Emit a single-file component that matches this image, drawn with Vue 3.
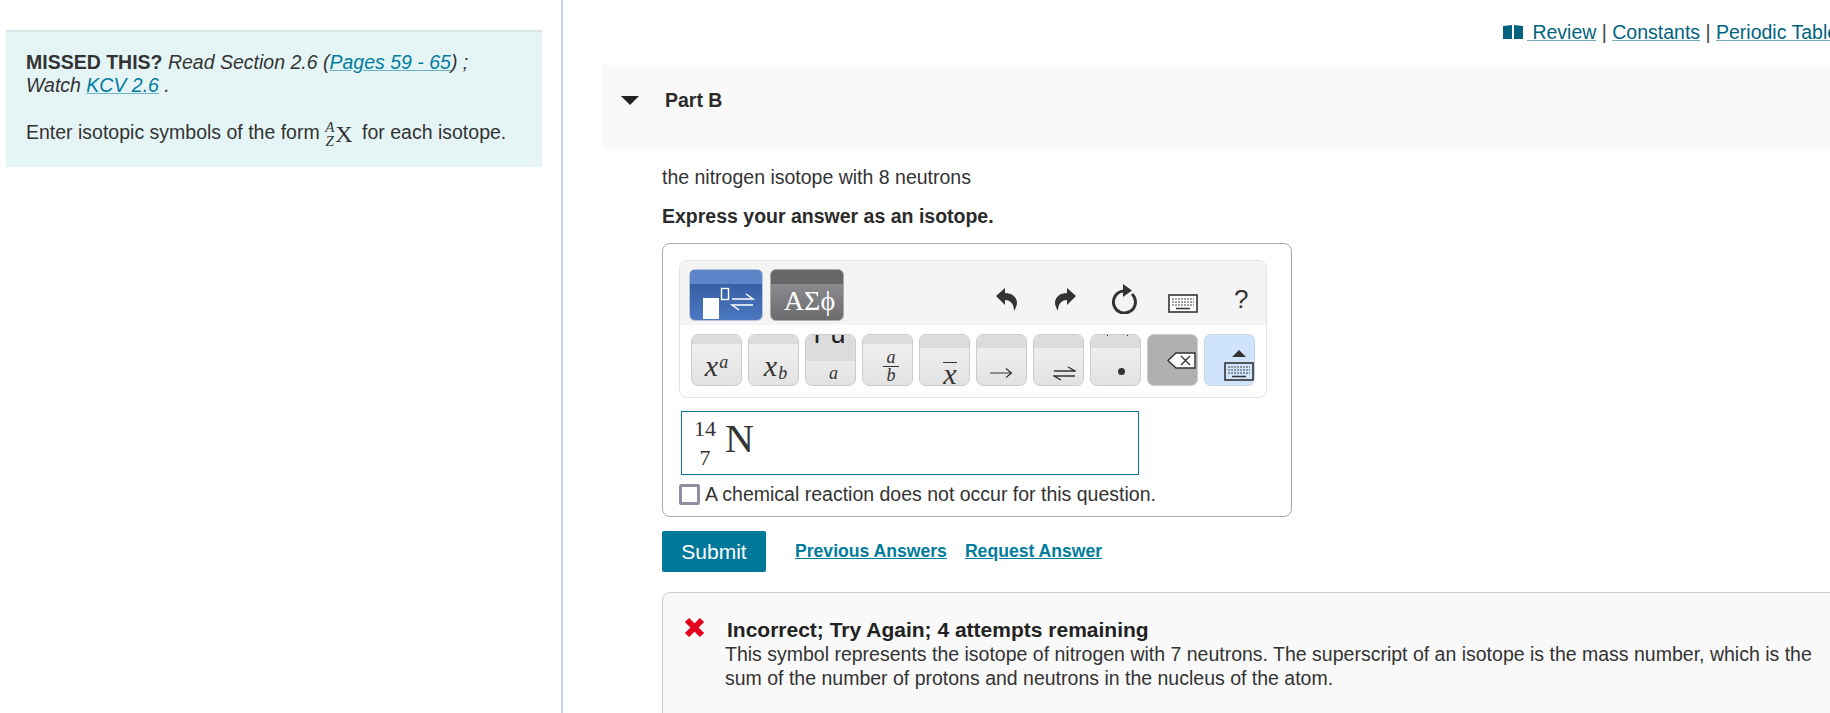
<template>
    <div class="page">
        <aside class="side">
            <div class="hint">
                <p class="hint-line"><b>MISSED THIS?</b> <i>Read Section 2.6 (<a class="link">Pages 59 - 65</a>) ;</i><br /><i>Watch <a class="link">KCV 2.6</a> .</i></p>
                <p class="hint-form">
                    Enter isotopic symbols of the form
                    <span class="iso-form"><span class="iso-stack"><i>A</i><i>Z</i></span>X</span>
                    for each isotope.
                </p>
            </div>
        </aside>

        <main class="main">
            <div class="top-links">
                <svg class="book" width="20" height="15" viewBox="0 0 20 15">
                    <path d="M0 1 L9 0 V14 L0 14 Z M11 0 L20 1 V14 L11 14 Z" fill="#00647f" />
                </svg>
                <a class="link-dark">&nbsp;Review</a><span class="sep"> | </span><a class="link-dark">Constants</a><span class="sep"> | </span><a class="link-dark">Periodic Table</a>
            </div>

            <div class="part-head">
                <span class="caret"></span>
                <b>Part B</b>
            </div>

            <div class="part-body">
                <p class="question">the nitrogen isotope with 8 neutrons</p>
                <p class="instruction">Express your answer as an isotope.</p>

                <div class="editor">
                    <div class="toolbar">
                        <div class="tool-top">
                            <div class="palette palette-blue">
                                <span class="palette-band"></span>
                                <svg class="palette-icon" width="74" height="37" viewBox="0 0 74 37">
                                    <rect x="13" y="14" width="16" height="21" fill="#fff" />
                                    <rect x="31.5" y="4.5" width="7" height="11" fill="none" stroke="#fff" stroke-width="1.4" />
                                    <path d="M42 15 H63 L56 10 M63 21 H42 L49 26" fill="none" stroke="#fff" stroke-width="1.5" />
                                </svg>
                            </div>
                            <div class="palette palette-gray">
                                <span class="palette-band"></span>
                                <span class="palette-text">ΑΣϕ</span>
                            </div>
                            <div class="actions">
                                <svg width="21" height="24" viewBox="0 0 21 24"><path d="M0 9 L9 1 V6 C16 6 21 10 21 16 C21 19 19 22 18 24 C18 19 16 13 9 13 V18 Z" fill="#333" /></svg>
                                <svg class="redo" width="21" height="24" viewBox="0 0 21 24"><path d="M0 9 L9 1 V6 C16 6 21 10 21 16 C21 19 19 22 18 24 C18 19 16 13 9 13 V18 Z" fill="#333" /></svg>
                                <svg class="reload" width="26" height="30" viewBox="0 0 26 30"><path d="M13 7 A11 11 0 1 0 21 10" fill="none" stroke="#333" stroke-width="3" /><path d="M12 0 L21 6.5 L12 13 Z" fill="#333" /></svg>
                                <svg class="kbd" width="30" height="19" viewBox="0 0 30 19">
                                    <rect x="1" y="1" width="28" height="17" fill="#fff" stroke="#333" stroke-width="1.6" />
                                    <path d="M4 5 H26 M4 8 H26 M4 11 H26" stroke="#444" stroke-dasharray="2 1" />
                                    <path d="M8 14.5 H22" stroke="#333" stroke-width="1.5" />
                                </svg>
                                <span class="help">?</span>
                            </div>
                        </div>
                        <div class="keys">
                            <div v-for="key in keys" :key="key.id" class="key" :class="key.kind">
                                <span class="key-band" :style="{ height: key.band + 'px' }">
                                    <span v-if="key.clip" class="key-clip">{{ key.clip }}</span>
                                </span>
                                <span class="key-face" :class="'face-' + key.id">
                                    <template v-if="key.id === 'sup'"><i class="mx">x</i><i class="sm sup">a</i></template>
                                    <template v-else-if="key.id === 'sub'"><i class="mx">x</i><i class="sm sub">b</i></template>
                                    <i v-else-if="key.id === 'pre'" class="sm">a</i>
                                    <span v-else-if="key.id === 'frac'" class="frac"><i>a</i><i>b</i></span>
                                    <i v-else-if="key.id === 'bar'" class="mx bar">x</i>
                                    <svg v-else-if="key.id === 'arrow'" class="arrow" width="23" height="12" viewBox="0 0 23 12"><path d="M0 6 H21 M16 1.5 L21.5 6 L16 10.5" fill="none" stroke="#333" stroke-width="1.2" /></svg>
                                    <svg v-else-if="key.id === 'eq'" class="eq" width="23" height="15" viewBox="0 0 23 15"><path d="M1 5 H22 L15 1 M22 10 H1 L8 14" fill="none" stroke="#333" stroke-width="1.3" /></svg>
                                    <span v-else-if="key.id === 'dot'" class="dot"></span>
                                    <svg v-else-if="key.id === 'back'" class="back" width="29" height="17" viewBox="0 0 29 17"><path d="M1 8.5 L9 1 H28 V16 H9 Z" fill="#fff" stroke="#333" stroke-width="1.4" /><path d="M14 4 L23 13 M23 4 L14 13" stroke="#333" stroke-width="1.4" /></svg>
                                    <span v-else-if="key.id === 'kb'" class="kb-wrap">
                                        <span class="up"></span>
                                        <svg width="30" height="19" viewBox="0 0 30 19">
                                            <rect x="1" y="1" width="28" height="17" fill="none" stroke="#333" stroke-width="1.6" />
                                            <path d="M4 5 H26 M4 8 H26 M4 11 H26" stroke="#444" stroke-dasharray="2 1" />
                                            <path d="M8 14.5 H22" stroke="#333" stroke-width="1.5" />
                                        </svg>
                                    </span>
                                </span>
                                <span v-if="key.id === 'dot'" class="tick tick-a"></span>
                                <span v-if="key.id === 'dot'" class="tick tick-b"></span>
                            </div>
                        </div>
                    </div>

                    <div class="answer">
                        <span class="nums"><span>14</span><span>7</span></span>
                        <span class="sym">N</span>
                    </div>

                    <label class="no-reaction">
                        <span class="check"></span>
                        A chemical reaction does not occur for this question.
                    </label>
                </div>

                <div class="submit-row">
                    <button class="submit">Submit</button>
                    <a class="action-link">Previous Answers</a>
                    <a class="action-link">Request Answer</a>
                </div>

                <div class="feedback">
                    <svg class="cross" width="21" height="21" viewBox="0 0 21 21">
                        <path d="M3 3 L18 18 M18 3 L3 18" stroke="#e2001a" stroke-width="6" />
                    </svg>
                    <div class="feedback-text">
                        <div class="feedback-title">Incorrect; Try Again; 4 attempts remaining</div>
                        <div>This symbol represents the isotope of nitrogen with 7 neutrons. The superscript of an isotope is the mass number, which is the<br />sum of the number of protons and neutrons in the nucleus of the atom.</div>
                    </div>
                </div>
            </div>
        </main>
    </div>
</template>

<script setup>
// band is the height of the darker strip at the top of each key
const keys = [
    { id: 'sup', band: 9 },
    { id: 'sub', band: 9 },
    { id: 'pre', band: 26, clip: 'Γu' },
    { id: 'frac', band: 9 },
    { id: 'bar', band: 13 },
    { id: 'arrow', band: 13 },
    { id: 'eq', band: 13 },
    { id: 'dot', band: 13 },
    { id: 'back', band: 0, kind: 'key-back' },
    { id: 'kb', band: 0, kind: 'key-kb' }
];
</script>

<style>
html, body {
    margin: 0;
    background: #fff;
}
</style>

<style scoped>
.page {
    display: flex;
    width: 1830px;
    height: 713px;
    overflow: hidden;
    font-family: "Liberation Sans", Arial, sans-serif;
    font-size: 19.5px;
    color: #333;
}

.side {
    flex: none;
    box-sizing: border-box;
    width: 563px;
    padding: 30px 0 0 6px;
    border-right: 2px solid #c6d4e3;
}

.hint {
    box-sizing: border-box;
    width: 536px;
    height: 137px;
    padding: 19px 20px 0;
    background: #e5f5f6;
    border-top: 2px solid #dbe6ea;
    line-height: 23px;
}

.hint p {
    margin: 0;
}

.hint-form {
    margin-top: 23px !important;
}

.link {
    color: #007c9e;
    text-decoration: underline;
    text-decoration-color: #6fb3c6;
}

.iso-form {
    display: inline-flex;
    align-items: center;
    margin-right: 4px;
    font-family: "Liberation Serif", serif;
    font-size: 24px;
    vertical-align: middle;
    line-height: 1;
}

.iso-stack {
    display: inline-flex;
    flex-direction: column;
    align-items: center;
    font-size: 15px;
    line-height: 14px;
    margin-right: 1px;
}

.main {
    flex: none;
    width: 1267px;
    padding-left: 39px;
}

.top-links {
    display: flex;
    align-items: center;
    height: 65px;
    margin-left: 901px;
    white-space: pre;
    color: #444;
}

.book {
    margin-right: 4px;
}

.link-dark {
    color: #00647f;
    text-decoration: underline;
    text-decoration-color: #77aabb;
}

.part-head {
    display: flex;
    align-items: center;
    gap: 26px;
    height: 84px;
    padding: 0 0 0 19px;
    margin-bottom: 17px;
    background: #f9f9f9;
    box-sizing: border-box;
}

.part-head b {
    margin-top: -14px;
    color: #2b2b2b;
}

.caret {
    width: 0;
    height: 0;
    margin-top: -14px;
    border-left: 9px solid transparent;
    border-right: 9px solid transparent;
    border-top: 9px solid #222;
}

.part-body {
    padding-left: 60px;
}

.question {
    margin: 0;
    line-height: 22px;
}

.instruction {
    margin: 17px 0 0;
    line-height: 22px;
    font-weight: 700;
    color: #2b2b2b;
}

.editor {
    box-sizing: border-box;
    width: 630px;
    height: 274px;
    margin-top: 16px;
    padding: 16px 16px 0;
    border: 1px solid #aaa;
    border-radius: 8px;
}

.toolbar {
    width: 588px;
    height: 138px;
    box-sizing: border-box;
    border: 1px solid #e4e4e4;
    border-radius: 8px;
    overflow: hidden;
    background: #fff;
}

.tool-top {
    display: flex;
    height: 64px;
    padding: 8px 0 0 9px;
    box-sizing: border-box;
    background: #f4f4f4;
}

.palette {
    position: relative;
    box-sizing: border-box;
    width: 74px;
    height: 52px;
    margin-right: 7px;
    border: 1px solid #b9c4d6;
    border-radius: 6px;
    overflow: hidden;
}

.palette-band {
    display: block;
    height: 14px;
}

.palette-blue {
    background: linear-gradient(#2f5599, #4b78c0);
}

.palette-blue .palette-band {
    background: #5c86c9;
}

.palette-gray {
    border-color: #aaa;
    background: linear-gradient(#96969c, #6c6c6e);
}

.palette-gray .palette-band {
    background: #666;
}

.palette-icon {
    position: absolute;
    left: 0;
    top: 14px;
}

.palette-text {
    display: block;
    padding-left: 5px;
    text-align: center;
    font-family: "Liberation Serif", serif;
    font-size: 28px;
    line-height: 34px;
    color: #fff;
}

.actions {
    display: flex;
    align-items: flex-start;
    margin-left: 145px;
    padding-top: 18px;
}

.actions .redo {
    transform: scaleX(-1);
    margin-left: 38px;
}

.actions .reload {
    margin: -3px 0 0 35px;
}

.actions .kbd {
    margin: 7px 0 0 31px;
}

.help {
    margin: -3px 0 0 36px;
    font-size: 26px;
    line-height: 30px;
}

.keys {
    display: flex;
    gap: 6px;
    padding: 9px 0 0 11px;
}

.key {
    position: relative;
    display: flex;
    flex-direction: column;
    box-sizing: border-box;
    flex: none;
    width: 51px;
    height: 52px;
    border: 1px solid #ccc;
    border-radius: 7px;
    overflow: hidden;
    background: linear-gradient(#f3f3f3, #e2e2e2);
}

.key-band {
    display: block;
    flex: none;
    background: #dcdcdc;
    overflow: hidden;
}

.key-clip {
    display: block;
    margin-top: -15px;
    text-align: center;
    font-size: 27px;
    line-height: 28px;
    letter-spacing: 2px;
    color: #222;
}

.key-face {
    flex: 1;
    display: flex;
    align-items: flex-end;
    justify-content: center;
    padding-bottom: 4px;
    font-family: "Liberation Serif", serif;
    color: #333;
    min-height: 0;
}

/* glyphs sit a little right of centre on most of the keys */
.face-sub {
    padding-left: 4px;
}

.face-pre {
    padding-left: 6px;
    padding-bottom: 1px;
}

.face-frac {
    padding-left: 7px;
}

.face-bar,
.face-dot,
.face-eq {
    padding-left: 11px;
}

.mx {
    font-size: 30px;
    line-height: 30px;
}

.sm {
    font-size: 18px;
    line-height: 22px;
}

.sup {
    margin: 0 0 8px 1px;
}

.sub {
    margin: 0 0 -3px 1px;
}

.frac {
    display: flex;
    flex-direction: column;
    align-items: center;
    width: 16px;
    font-size: 18px;
    line-height: 17px;
    margin-bottom: -3px;
}

.frac i:first-child {
    width: 100%;
    text-align: center;
    border-bottom: 1px solid #333;
    line-height: 18px;
}

.bar {
    border-top: 1px solid #333;
    line-height: 22px;
    margin-bottom: -4px;
}

.arrow {
    margin-bottom: 2px;
}

.eq {
    margin-bottom: 0;
}

.dot {
    width: 7px;
    height: 7px;
    margin-bottom: 6px;
    border-radius: 50%;
    background: #333;
}

.tick {
    position: absolute;
    top: 0;
    width: 1px;
    height: 1px;
    background: #222;
}

.tick-a {
    left: 16px;
}

.tick-b {
    left: 36px;
}

.key-back {
    background: #b0b0b0;
}

.key-back .key-face {
    align-items: flex-start;
    justify-content: flex-end;
    padding: 17px 1px 0 0;
}

.key-kb {
    background: #cfe4fb;
    border-color: #c4d5e8;
}

.key-kb .key-face {
    padding: 0;
    justify-content: flex-end;
}

.kb-wrap {
    display: flex;
    flex-direction: column;
    align-items: center;
    gap: 5px;
    margin-bottom: 4px;
}

.up {
    width: 0;
    height: 0;
    border-left: 7px solid transparent;
    border-right: 7px solid transparent;
    border-bottom: 7px solid #333;
}

.answer {
    display: flex;
    box-sizing: border-box;
    width: 458px;
    height: 64px;
    margin: 13px 0 0 2px;
    padding-left: 11px;
    border: 1px solid #00789a;
    font-family: "Liberation Serif", serif;
    color: #333;
}

.nums {
    display: flex;
    flex-direction: column;
    align-items: center;
    width: 24px;
    padding-top: 2px;
    font-size: 22px;
    line-height: 29px;
}

.sym {
    margin-left: 8px;
    font-size: 40px;
    line-height: 54px;
}

.no-reaction {
    display: flex;
    align-items: center;
    gap: 5px;
    margin-top: 8px;
    line-height: 22px;
}

.check {
    box-sizing: border-box;
    width: 21px;
    height: 21px;
    border: 3px solid #8f8fa3;
    border-radius: 2px;
    background: #fff;
}

.submit-row {
    display: flex;
    align-items: center;
    margin-top: 14px;
}

.submit {
    width: 104px;
    height: 41px;
    margin-right: 29px;
    padding: 0;
    border: 0;
    border-radius: 2px;
    background: #00789a;
    color: #fff;
    font: 400 21px "Liberation Sans", Arial, sans-serif;
}

.action-link {
    margin-right: 18px;
    font-weight: 700;
    font-size: 17.6px;
    color: #007c9e;
    text-decoration: underline;
}

.feedback {
    display: flex;
    box-sizing: border-box;
    width: 1300px;
    height: 200px;
    margin-top: 20px;
    padding: 24px 0 0 21px;
    border: 1px solid #ccc;
    border-radius: 8px;
    background: #f9f9f9;
}

.cross {
    flex: none;
    margin-right: 20px;
}

.feedback-text {
    line-height: 24px;
}

.feedback-title {
    margin-left: 2px;
    padding-top: 1px;
    font-weight: 700;
    font-size: 21px;
    color: #222;
}
</style>
